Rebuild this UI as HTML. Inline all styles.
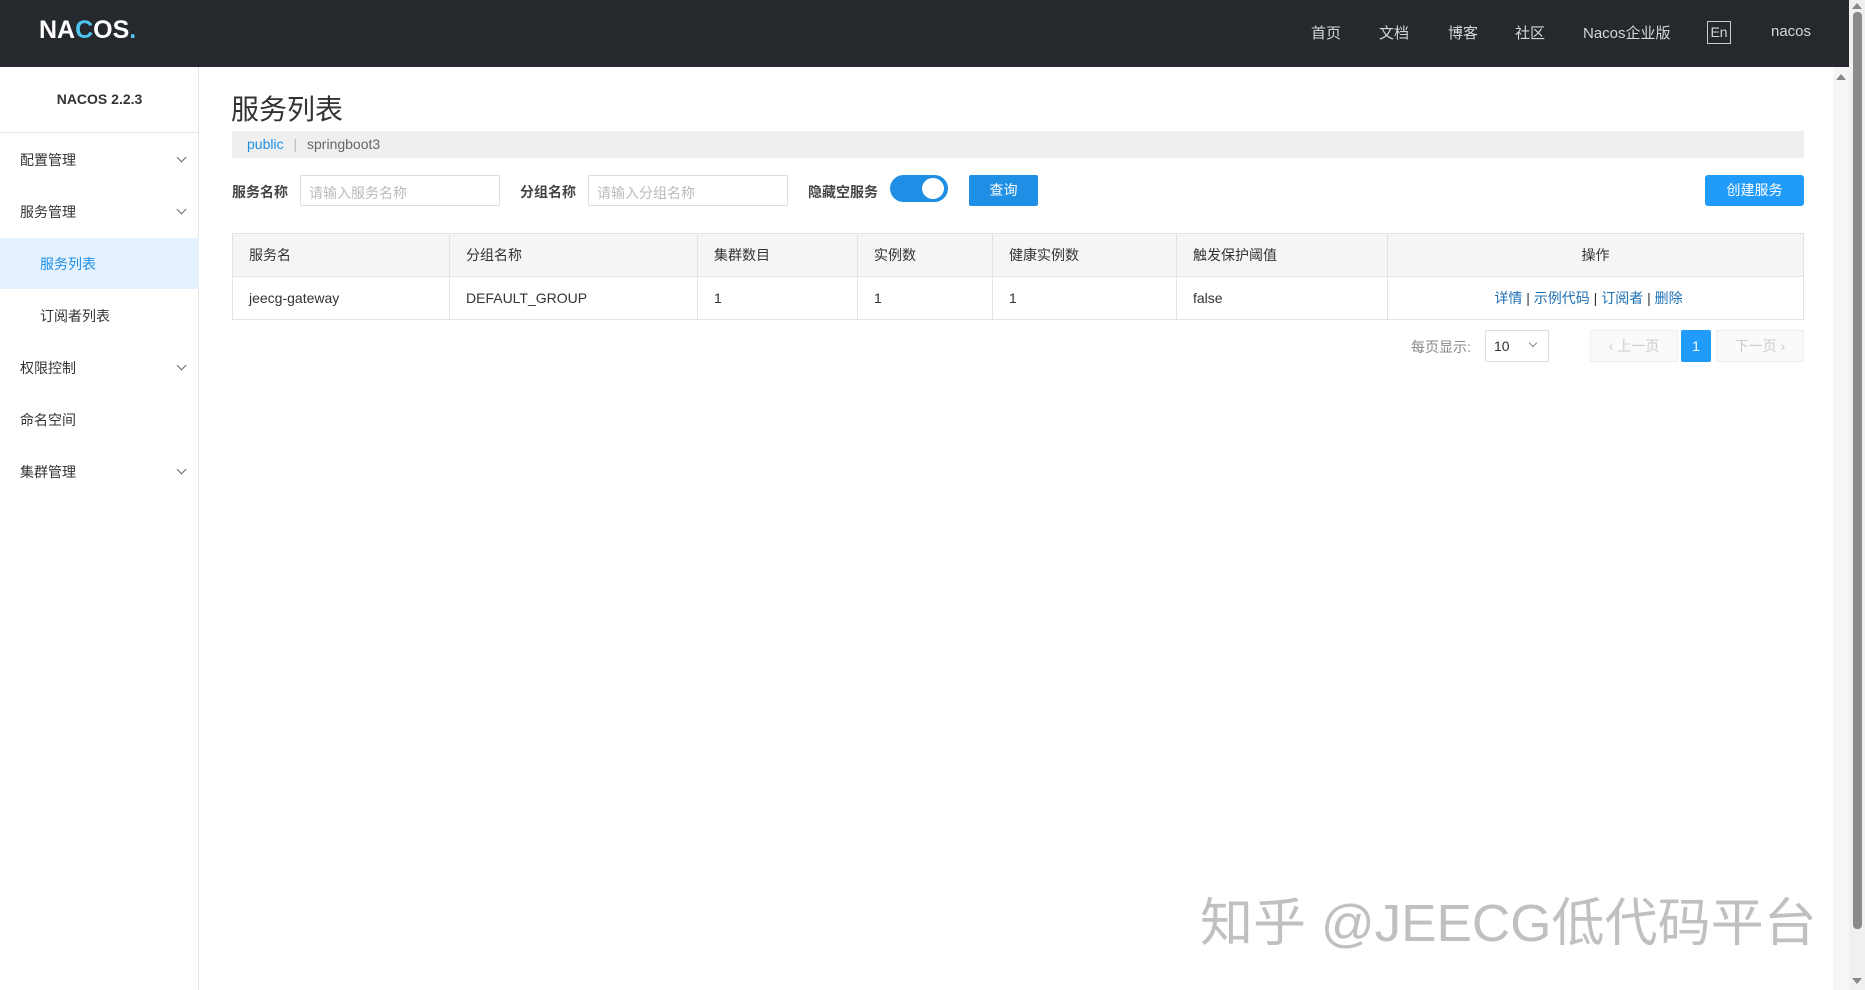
<!DOCTYPE html>
<html><head><meta charset="utf-8"><style>
*{box-sizing:border-box;margin:0;padding:0}
body{width:1865px;height:990px;overflow:hidden;background:#fff;font-family:"Liberation Sans","Noto Sans CJK SC",sans-serif;font-size:14px;color:#333;position:relative}
.abs{position:absolute}
.hdr{left:0;top:0;width:1849px;height:67px;background:#25282d}
.nav{top:22px;color:#d6d6d6;font-size:15px}
.side{left:0;top:67px;width:199px;height:923px;border-right:1px solid #e6e6e6}
.mi{left:20px;font-size:14px;color:#333}
.chev{position:absolute;left:178px;width:7px;height:7px;border-right:1px solid #666;border-bottom:1px solid #666;transform:rotate(45deg)}
.lbl{top:182px;font-size:14px;font-weight:bold;color:#444}
.inp{top:175px;height:31px;border:1px solid #ddd;border-radius:2px;color:#bbb;font-size:14px;padding:7px 8px}
td{border:1px solid #e3e3e3;padding:0 16px;font-size:14px;color:#333}
table{border-collapse:collapse}
</style></head><body>
<div class="abs hdr"></div>
<div class="abs" style="left:39px;top:16px;color:#fff;font-size:25px;font-weight:bold">NA<span style="color:#4fc4ee">C</span>OS<span style="color:#4fc4ee">.</span></div>
<div class="abs nav" style="left:1311px">首页</div>
<div class="abs nav" style="left:1379px">文档</div>
<div class="abs nav" style="left:1448px">博客</div>
<div class="abs nav" style="left:1515px">社区</div>
<div class="abs nav" style="left:1583px">Nacos企业版</div>
<div class="abs" style="left:1707px;top:21px;width:24px;height:23px;border:1px solid #ccc;color:#d6d6d6;font-size:14px;text-align:center;line-height:20px">En</div>
<div class="abs nav" style="left:1771px;top:23px">nacos</div>

<div class="abs side"></div>
<div class="abs" style="left:0;top:132px;width:199px;border-top:1px solid #e6e6e6"></div>
<div class="abs" style="left:0;top:91px;width:199px;text-align:center;font-weight:bold;font-size:14px;color:#333">NACOS 2.2.3</div>
<div class="abs mi" style="top:150px">配置管理</div><div class="chev" style="top:154px"></div>
<div class="abs mi" style="top:202px">服务管理</div><div class="chev" style="top:206px"></div>
<div class="abs" style="left:0;top:238px;width:199px;height:51px;background:#e5f2fd"></div>
<div class="abs mi" style="left:40px;top:254px;color:#1e8fe5">服务列表</div>
<div class="abs mi" style="left:40px;top:306px">订阅者列表</div>
<div class="abs mi" style="top:358px">权限控制</div><div class="chev" style="top:362px"></div>
<div class="abs mi" style="top:410px">命名空间</div>
<div class="abs mi" style="top:462px">集群管理</div><div class="chev" style="top:466px"></div>

<div class="abs" style="left:231px;top:88px;font-size:28px;color:#333">服务列表</div>
<div class="abs" style="left:232px;top:131px;width:1572px;height:27px;background:#efefef;font-size:14px;line-height:27px;padding-left:15px;color:#666"><span style="color:#1e8fe5">public</span> <span style="color:#bbb;margin:0 6px">|</span> springboot3</div>

<div class="abs lbl" style="left:232px">服务名称</div>
<div class="abs inp" style="left:300px;width:200px">请输入服务名称</div>
<div class="abs lbl" style="left:520px">分组名称</div>
<div class="abs inp" style="left:588px;width:200px">请输入分组名称</div>
<div class="abs lbl" style="left:808px">隐藏空服务</div>
<div class="abs" style="left:890px;top:175px;width:58px;height:27px;border-radius:14px;background:#1e8fe5"></div>
<div class="abs" style="left:922px;top:178px;width:22px;height:21px;border-radius:50%;background:#fff"></div>
<div class="abs" style="left:969px;top:175px;width:69px;height:31px;background:#1e8fe5;color:#fff;text-align:center;line-height:31px;border-radius:2px">查询</div>
<div class="abs" style="left:1705px;top:175px;width:99px;height:31px;background:#209bfa;color:#fff;text-align:center;line-height:31px;border-radius:3px">创建服务</div>

<table class="abs" style="left:232px;top:233px;width:1572px">
<tr style="height:43px;background:#f5f5f5"><td style="width:217px">服务名</td><td style="width:248px">分组名称</td><td style="width:160px">集群数目</td><td style="width:135px">实例数</td><td style="width:184px">健康实例数</td><td style="width:211px">触发保护阈值</td><td style="text-align:center">操作</td></tr>
<tr style="height:43px"><td>jeecg-gateway</td><td>DEFAULT_GROUP</td><td>1</td><td>1</td><td>1</td><td>false</td><td style="text-align:center;color:#1e6fb5;padding-right:30px">详情 <span style="color:#333">|</span> 示例代码 <span style="color:#333">|</span> 订阅者 <span style="color:#333">|</span> 删除</td></tr>
</table>

<div class="abs" style="left:1411px;top:337px;color:#888">每页显示:</div>
<div class="abs" style="left:1485px;top:330px;width:64px;height:32px;border:1px solid #ddd;border-radius:2px;padding:7px 8px;color:#333">10<span style="position:absolute;left:44px;top:9px;width:6px;height:6px;border-right:1px solid #888;border-bottom:1px solid #888;transform:rotate(45deg)"></span></div>
<div class="abs" style="left:1590px;top:330px;width:88px;height:32px;border:1px solid #eee;background:#fafafa;color:#ccc;text-align:center;line-height:30px">‹ 上一页</div>
<div class="abs" style="left:1681px;top:330px;width:30px;height:32px;background:#209bfa;color:#fff;text-align:center;line-height:32px;border-radius:2px">1</div>
<div class="abs" style="left:1716px;top:330px;width:88px;height:32px;border:1px solid #eee;background:#fafafa;color:#ccc;text-align:center;line-height:30px">下一页 ›</div>

<div class="abs" style="left:1200px;top:881px;font-size:52px;color:#c0c0c0;white-space:nowrap;transform:scaleX(1.02);transform-origin:left top">知乎 @JEECG低代码平台</div>

<div class="abs" style="left:1833px;top:67px;width:16px;height:923px;background:#f6f6f6"></div>
<div class="abs" style="left:1836px;top:74px;border-left:5px solid transparent;border-right:5px solid transparent;border-bottom:6px solid #888"></div>
<div class="abs" style="left:1849px;top:0;width:16px;height:990px;background:#f0f0f0"></div>
<div class="abs" style="left:1853px;top:12px;width:9px;height:917px;background:#8a8a8a;border-radius:4px"></div>
<div class="abs" style="left:1852px;top:3px;border-left:5px solid transparent;border-right:5px solid transparent;border-bottom:6px solid #888"></div>
<div class="abs" style="left:1852px;top:978px;border-left:5px solid transparent;border-right:5px solid transparent;border-top:6px solid #888"></div>
</body></html>
